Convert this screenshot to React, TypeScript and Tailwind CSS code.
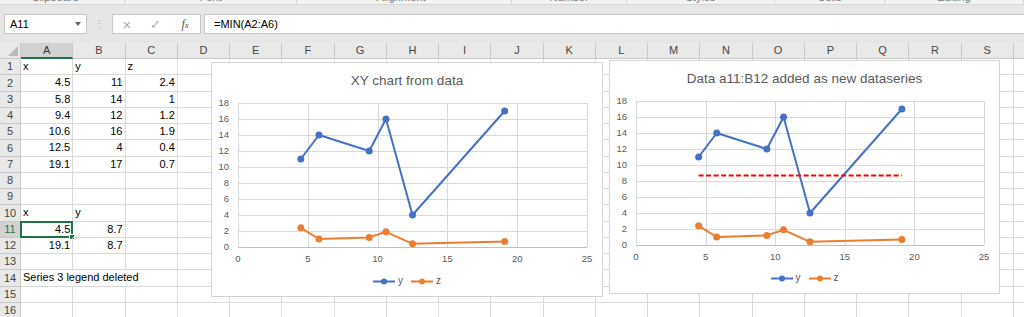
import React from 'react';

const COLS = 'ABCDEFGHIJKLMNOPQRST'.split('');
const ROW_COUNT = 16;

const Y_DATA: [number, number][] = [[4.5, 11], [5.8, 14], [9.4, 12], [10.6, 16], [12.5, 4], [19.1, 17]];
const Z_DATA: [number, number][] = [[4.5, 2.4], [5.8, 1], [9.4, 1.2], [10.6, 1.9], [12.5, 0.4], [19.1, 0.7]];

const CELLS: Record<string, { t: string; r?: boolean }> = {
  A1: { t: 'x' }, B1: { t: 'y' }, C1: { t: 'z' },
  A2: { t: '4.5', r: true }, B2: { t: '11', r: true }, C2: { t: '2.4', r: true },
  A3: { t: '5.8', r: true }, B3: { t: '14', r: true }, C3: { t: '1', r: true },
  A4: { t: '9.4', r: true }, B4: { t: '12', r: true }, C4: { t: '1.2', r: true },
  A5: { t: '10.6', r: true }, B5: { t: '16', r: true }, C5: { t: '1.9', r: true },
  A6: { t: '12.5', r: true }, B6: { t: '4', r: true }, C6: { t: '0.4', r: true },
  A7: { t: '19.1', r: true }, B7: { t: '17', r: true }, C7: { t: '0.7', r: true },
  A10: { t: 'x' }, B10: { t: 'y' },
  A11: { t: '4.5', r: true }, B11: { t: '8.7', r: true },
  A12: { t: '19.1', r: true }, B12: { t: '8.7', r: true },
  A14: { t: 'Series 3 legend deleted' },
};

const RIBBON_GROUPS = [
  { label: 'Clipboard', w: 'w-[125px]', pr: 'pr-[14px]' },
  { label: 'Font', w: 'w-[172px]', pr: 'pr-[0px]' },
  { label: 'Alignment', w: 'w-[215px]', pr: 'pr-[6px]' },
  { label: 'Number', w: 'w-[115px]', pr: 'pr-[0px]' },
  { label: 'Styles', w: 'w-[148px]', pr: 'pr-[0px]' },
  { label: 'Cells', w: 'w-[110px]', pr: 'pr-[0px]' },
  { label: 'Editing', w: 'w-[139px]', pr: 'pr-[0px]' },
];

function LegendKey({ color, label }: { color: string; label: string }) {
  return (
    <div className="flex items-center gap-[3px]">
      <svg width="22" height="7" viewBox="0 0 22 7">
        <line x1="0" y1="3.5" x2="22" y2="3.5" stroke={color} strokeWidth="2" />
        <circle cx="11" cy="3.5" r="3" fill={color} />
      </svg>
      <span className="text-[10px] leading-none text-[#595959]">{label}</span>
    </div>
  );
}

function Chart({ title, className, width, dashed }: { title: string; className: string; width: number; dashed?: boolean }) {
  const X0 = 26;
  const X1 = width - 17;
  const Y0 = 147;
  const Y1 = 3;
  const px = (v: number) => X0 + (v / 25) * (X1 - X0);
  const py = (v: number) => Y0 - (v / 18) * (Y0 - Y1);
  const pts = (d: [number, number][]) => d.map(([x, y]) => `${px(x)},${py(y)}`).join(' ');
  const yTicks = [0, 2, 4, 6, 8, 10, 12, 14, 16, 18];
  const xTicks = [0, 5, 10, 15, 20, 25];

  return (
    <div className={`absolute flex flex-col bg-white border border-[#d4d4d4] ${className}`}>
      <div className="h-[37px] flex items-center justify-center text-[13.5px] text-[#595959]">{title}</div>
      <svg width={width - 2} height="168" className="block">
        {yTicks.map((t) => (
          <g key={`y${t}`}>
            <line x1={X0} y1={py(t) + 0.5} x2={X1} y2={py(t) + 0.5} stroke={t === 0 ? '#bfbfbf' : '#d9d9d9'} strokeWidth="1" />
            <text x={X0 - 9} y={py(t) + 3.3} textAnchor="end" fontSize="9.5" fill="#595959" fontFamily="Liberation Sans, Arial, sans-serif">{t}</text>
          </g>
        ))}
        {xTicks.map((t) => (
          <g key={`x${t}`}>
            <line x1={Math.round(px(t)) + 0.5} y1={Y1} x2={Math.round(px(t)) + 0.5} y2={Y0} stroke="#d9d9d9" strokeWidth="1" />
            <text x={px(t)} y={Y0 + 15} textAnchor="middle" fontSize="9.5" fill="#595959" fontFamily="Liberation Sans, Arial, sans-serif">{t}</text>
          </g>
        ))}
        <polyline points={pts(Y_DATA)} fill="none" stroke="#4472c4" strokeWidth="2" strokeLinejoin="round" />
        {Y_DATA.map(([x, y]) => <circle key={`yc${x}`} cx={px(x)} cy={py(y)} r="3.5" fill="#4472c4" />)}
        <polyline points={pts(Z_DATA)} fill="none" stroke="#ed7d31" strokeWidth="2" strokeLinejoin="round" />
        {Z_DATA.map(([x, y]) => <circle key={`zc${x}`} cx={px(x)} cy={py(y)} r="3.5" fill="#ed7d31" />)}
        {dashed && (
          <line x1={px(4.5)} y1={py(8.7)} x2={px(19.1)} y2={py(8.7)} stroke="#ff0000" strokeWidth="2" strokeDasharray="5 2.5" />
        )}
      </svg>
      <div className="flex items-center justify-center gap-[8px] h-[28px] pb-[2px]">
        <LegendKey color="#4472c4" label="y" />
        <LegendKey color="#ed7d31" label="z" />
      </div>
    </div>
  );
}

function GridRow({ n }: { n: number }) {
  const selRow = n === 11;
  return (
    <div className="flex h-[16.25px] shrink-0">
      <div
        className={`w-[21px] shrink-0 flex items-center justify-center text-[11px] border-r border-b border-[#c8c8c8] ${
          selRow ? 'bg-[#d2d2d2] text-[#217346]' : 'bg-[#e9e9e9] text-[#444]'
        }`}
      >
        {n}
      </div>
      {COLS.map((c) => {
        const key = `${c}${n}`;
        const cell = CELLS[key];
        const noRight = n === 14 && (c === 'A' || c === 'B');
        return (
          <div
            key={key}
            className={`w-[52.25px] shrink-0 relative flex items-center px-[2px] text-[11px] text-black border-b border-[#dadada] ${
              noRight ? '' : 'border-r'
            } ${cell?.r ? 'justify-end' : 'justify-start'}`}
          >
            {cell && <span className="whitespace-nowrap leading-none z-10">{cell.t}</span>}
            {key === 'A11' && (
              <div className="absolute -left-[1px] -top-[1px] -right-[1px] -bottom-[1px] border-2 border-[#217346]">
                <div className="absolute -right-[4px] -bottom-[4px] w-[6px] h-[6px] bg-[#217346] border border-white" />
              </div>
            )}
          </div>
        );
      })}
    </div>
  );
}

export default function App() {
  return (
    <div className="relative w-[1024px] h-[317px] overflow-hidden bg-white font-['Liberation_Sans',Arial,sans-serif]">
      {/* ribbon group labels, mostly scrolled off */}
      <div className="h-[5px] overflow-hidden bg-[#f3f3f3] border-b border-[#d6d6d6]">
        <div className="flex -mt-[9px] h-[13px] text-[11px] leading-[13px] text-[#777]">
          {RIBBON_GROUPS.map((g) => (
            <div key={g.label} className={`${g.w} ${g.pr} shrink-0 relative flex justify-center border-r border-[#d6d6d6]`}>
              {g.label}
            </div>
          ))}
        </div>
      </div>

      {/* formula bar */}
      <div className="h-[38px] bg-[#e6e6e6] pt-[9px]">
        <div className="flex h-[20px] items-stretch">
          <div className="ml-[4px] w-[83px] bg-white border border-[#c6c6c6] flex items-center justify-between pl-[5px] pr-[5px]">
            <span className="text-[11px] text-black">A11</span>
            <span className="w-0 h-0 border-l-[3.5px] border-r-[3.5px] border-t-[4px] border-l-transparent border-r-transparent border-t-[#666]" />
          </div>
          <div className="w-[25px] flex items-center justify-center text-[#aaa] text-[11px]">⋮</div>
          <div className="w-[89px] bg-white border border-[#c6c6c6] flex items-center text-[#aaa]">
            <span className="w-[28px] text-center text-[15px] leading-none font-light">×</span>
            <span className="w-[30px] text-center text-[13px] leading-none">✓</span>
            <span className="w-[30px] text-center text-[12px] leading-none italic font-['Liberation_Serif',serif] text-[#555]">f<span className="text-[9px]">x</span></span>
          </div>
          <div className="ml-[3px] flex-1 bg-white border border-[#c6c6c6] border-r-0 flex items-center pl-[9px] text-[11px] text-black">
            =MIN(A2:A6)
          </div>
        </div>
      </div>

      {/* column headers */}
      <div className="flex h-[16px] bg-[#e9e9e9]">
        <div className="w-[21px] shrink-0 relative border-r border-b border-[#c8c8c8]">
          <svg className="absolute right-[2px] bottom-[2px]" width="10" height="10" viewBox="0 0 10 10">
            <polygon points="10,0 10,10 0,10" fill="#b9b9b9" />
          </svg>
        </div>
        {COLS.map((c) => (
          <div
            key={c}
            className={`w-[52.25px] shrink-0 flex items-center justify-center text-[11px] border-r border-[#c8c8c8] ${
              c === 'A' ? 'bg-[#d2d2d2] text-[#333] border-b-2 border-b-[#217346]' : 'text-[#444] border-b'
            }`}
          >
            {c}
          </div>
        ))}
      </div>

      {/* sheet */}
      <div className="flex flex-col">
        {Array.from({ length: ROW_COUNT }, (_, i) => (
          <GridRow key={i} n={i + 1} />
        ))}
      </div>

      <Chart title="XY chart from data" className="left-[211px] top-[62px] w-[392px] h-[235px]" width={392} />
      <Chart title="Data a11:B12 added as new dataseries" className="left-[609px] top-[60px] w-[391px] h-[234px]" width={391} dashed />
    </div>
  );
}
